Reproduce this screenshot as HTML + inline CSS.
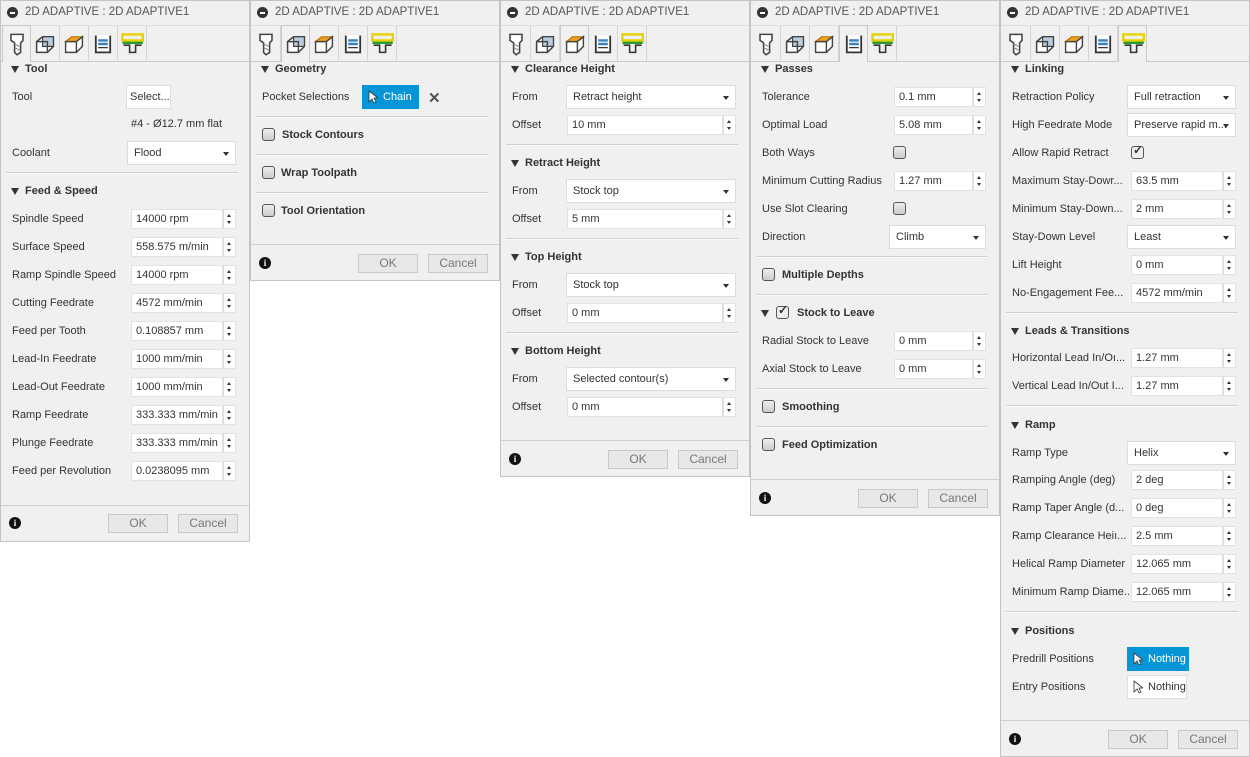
<!DOCTYPE html>
<html><head><meta charset="utf-8"><style>
*{box-sizing:border-box;margin:0;padding:0}
body{width:1250px;height:757px;background:#fff;position:relative;overflow:hidden;font-family:"Liberation Sans",Arial,sans-serif;font-size:11px;color:#333}
.p{position:absolute;top:0;width:250px;border:1px solid #c4c4c4;background:#f0f0f0}
.p>*{position:absolute}
.tt{left:24px;top:5px;color:#555;font-size:11.5px;letter-spacing:0}
.mi{left:6px;top:6px;width:11px;height:11px;border-radius:50%;background:#333}
.mi:after{content:"";position:absolute;left:3px;top:5px;width:5px;height:1.5px;background:#fff}
.tabs{left:0;top:24px;width:248px;height:37px;border-top:1px solid #ddd;border-bottom:1px solid #c9c9c9}
.tab{position:absolute;top:0;width:29px;height:36px;border-right:1px solid #d4d4d4}
.tab.a{background:#f0f0f0;border:1px solid #c9c9c9;border-bottom:none;height:37px;top:-1px}
.tab svg{position:absolute;left:4px;top:7px;transform:scale(1.2);transform-origin:10px 11px}
.l{left:11px;line-height:14px;white-space:nowrap}
.h{left:24px;font-weight:bold;line-height:14px}
.tri{left:10px;width:0;height:0;border-left:4.5px solid transparent;border-right:4.5px solid transparent;border-top:7px solid #333}
.in{background:#fff;border:1px solid #e2e2e2;height:20px;line-height:18px;padding-left:4px;white-space:nowrap;overflow:hidden}
.sp{width:13px;height:20px;background:#fff;border:1px solid #e2e2e2;border-left:1px solid #ddd}
.sp:before,.sp:after{content:"";position:absolute;left:3px;border-left:2.5px solid transparent;border-right:2.5px solid transparent}
.sp:before{top:4px;border-bottom:3px solid #333}
.sp:after{top:11px;border-top:3px solid #333}
.dd{background:#fff;border:1px solid #dcdcdc;height:24px;line-height:22px;padding-left:6px;white-space:nowrap}
.dd:after{content:"";position:absolute;right:6px;top:10px;border-left:3.5px solid transparent;border-right:3.5px solid transparent;border-top:4px solid #333}
.sep{left:5px;width:232px;height:2px;border-top:1px solid #cfcfcf;border-bottom:1px solid #fafafa}
.cb{width:13px;height:13px;border:1px solid #555;border-radius:3px;background:linear-gradient(#eee,#ccc)}
.bh{font-weight:bold;line-height:14px}
.fl{left:0;width:248px;height:1px;background:#cfcfcf}
.info{left:8px;width:12px;height:12px;border-radius:50%;background:#111;color:#fff;font:bold 9px "Liberation Serif",serif;text-align:center;line-height:12px}
.btn{width:60px;height:19px;border:1px solid #c8c8c8;background:#e8e8e8;text-align:center;line-height:17px;font-size:12px;color:#777}
.bb{background:#0696d7;color:#fff;height:24px;line-height:24px;padding-left:21px}
.wb{background:#fff;border:1px solid #ddd;height:24px;line-height:22px;padding-left:20px}
</style></head><body>

<!-- PANEL 1 -->
<div class="p" style="left:0;height:542px">
<div class="mi"></div><div class="tt">2D ADAPTIVE : 2D ADAPTIVE1</div>
<div class="tabs">
<div class="tab a" style="left:1px"><svg width="20" height="22"><path d="M5 3h10v5l-2 2v8l-3 2-2-2v-8l-3-2z" fill="#fff" stroke="#444" stroke-width="1.3"/><path d="M8 11l4 2M8 14l4 2" stroke="#888"/></svg></div>
<div class="tab" style="left:30px"><svg width="20" height="22"><path d="M3 9l5-4h9v8l-5 5H3z" fill="#fff" stroke="#444" stroke-width="1.3"/><path d="M8 5h9v8H8z" fill="#bcd" stroke="#444"/><path d="M3 9h9v9" fill="none" stroke="#444" stroke-width="1.2"/></svg></div>
<div class="tab" style="left:59px"><svg width="20" height="22"><path d="M3 9l5-4h9l-5 4z" fill="#f0a020" stroke="#b67000"/><path d="M3 9h9v9H3z M12 9l5-4v8l-5 5" fill="#fff" stroke="#444" stroke-width="1.2"/></svg></div>
<div class="tab" style="left:88px"><svg width="20" height="22"><path d="M4 4v14h12V4" fill="#fff" stroke="#333" stroke-width="1.5"/><path d="M6 8h8M6 11h8" stroke="#3a7fc0" stroke-width="2"/><path d="M6 14h8" stroke="#333"/></svg></div>
<div class="tab" style="left:117px"><svg width="22" height="22"><rect x="2" y="3" width="17" height="5" fill="none" stroke="#e6d200" stroke-width="2"/><path d="M2 10h17" stroke="#2a9a2a" stroke-width="2"/><path d="M3 12h5v6h5v-6h5" fill="none" stroke="#333" stroke-width="1.3"/></svg></div>
</div>
<div class="tri" style="top:65px"></div><div class="h" style="top:61px">Tool</div>
<div class="l" style="top:89px">Tool</div>
<div style="left:125px;top:84px;width:45px;height:24px;background:#fff;border:1px solid #ddd;line-height:22px;padding-left:3px">Select...</div>
<div style="left:130px;top:117px">#4 - Ø12.7 mm flat</div>
<div class="l" style="top:145px">Coolant</div>
<div class="dd" style="left:126px;top:140px;width:109px">Flood</div>
<div class="sep" style="top:171px"></div>
<div class="tri" style="top:187px"></div><div class="h" style="top:183px">Feed &amp; Speed</div>
<div class="l" style="top:211px">Spindle Speed</div><div class="in" style="left:130px;top:208px;width:92px">14000 rpm</div><div class="sp" style="left:222px;top:208px"></div>
<div class="l" style="top:239px">Surface Speed</div><div class="in" style="left:130px;top:236px;width:92px">558.575 m/min</div><div class="sp" style="left:222px;top:236px"></div>
<div class="l" style="top:267px">Ramp Spindle Speed</div><div class="in" style="left:130px;top:264px;width:92px">14000 rpm</div><div class="sp" style="left:222px;top:264px"></div>
<div class="l" style="top:295px">Cutting Feedrate</div><div class="in" style="left:130px;top:292px;width:92px">4572 mm/min</div><div class="sp" style="left:222px;top:292px"></div>
<div class="l" style="top:323px">Feed per Tooth</div><div class="in" style="left:130px;top:320px;width:92px">0.108857 mm</div><div class="sp" style="left:222px;top:320px"></div>
<div class="l" style="top:351px">Lead-In Feedrate</div><div class="in" style="left:130px;top:348px;width:92px">1000 mm/min</div><div class="sp" style="left:222px;top:348px"></div>
<div class="l" style="top:379px">Lead-Out Feedrate</div><div class="in" style="left:130px;top:376px;width:92px">1000 mm/min</div><div class="sp" style="left:222px;top:376px"></div>
<div class="l" style="top:407px">Ramp Feedrate</div><div class="in" style="left:130px;top:404px;width:92px">333.333 mm/min</div><div class="sp" style="left:222px;top:404px"></div>
<div class="l" style="top:435px">Plunge Feedrate</div><div class="in" style="left:130px;top:432px;width:92px">333.333 mm/min</div><div class="sp" style="left:222px;top:432px"></div>
<div class="l" style="top:463px">Feed per Revolution</div><div class="in" style="left:130px;top:460px;width:92px">0.0238095 mm</div><div class="sp" style="left:222px;top:460px"></div>
<div class="fl" style="top:504px"></div>
<div class="info" style="top:516px">i</div>
<div class="btn" style="left:107px;top:513px">OK</div><div class="btn" style="left:177px;top:513px">Cancel</div>
</div>

<!-- PANEL 2 -->
<div class="p" style="left:250px;height:281px">
<div class="mi"></div><div class="tt">2D ADAPTIVE : 2D ADAPTIVE1</div>
<div class="tabs">
<div class="tab" style="left:1px"><svg width="20" height="22"><path d="M5 3h10v5l-2 2v8l-3 2-2-2v-8l-3-2z" fill="#fff" stroke="#444" stroke-width="1.3"/><path d="M8 11l4 2M8 14l4 2" stroke="#888"/></svg></div>
<div class="tab a" style="left:30px"><svg width="20" height="22"><path d="M3 9l5-4h9v8l-5 5H3z" fill="#fff" stroke="#444" stroke-width="1.3"/><path d="M8 5h9v8H8z" fill="#bcd" stroke="#444"/><path d="M3 9h9v9" fill="none" stroke="#444" stroke-width="1.2"/></svg></div>
<div class="tab" style="left:59px"><svg width="20" height="22"><path d="M3 9l5-4h9l-5 4z" fill="#f0a020" stroke="#b67000"/><path d="M3 9h9v9H3z M12 9l5-4v8l-5 5" fill="#fff" stroke="#444" stroke-width="1.2"/></svg></div>
<div class="tab" style="left:88px"><svg width="20" height="22"><path d="M4 4v14h12V4" fill="#fff" stroke="#333" stroke-width="1.5"/><path d="M6 8h8M6 11h8" stroke="#3a7fc0" stroke-width="2"/><path d="M6 14h8" stroke="#333"/></svg></div>
<div class="tab" style="left:117px"><svg width="22" height="22"><rect x="2" y="3" width="17" height="5" fill="none" stroke="#e6d200" stroke-width="2"/><path d="M2 10h17" stroke="#2a9a2a" stroke-width="2"/><path d="M3 12h5v6h5v-6h5" fill="none" stroke="#333" stroke-width="1.3"/></svg></div>
</div>
<div class="tri" style="top:65px"></div><div class="h" style="top:61px">Geometry</div>
<div class="l" style="top:89px">Pocket Selections</div>
<div class="bb" style="left:111px;top:84px;width:57px">Chain<svg style="position:absolute;left:6px;top:5px" width="10" height="14"><path d="M1 1v11l3-3 2 4 2-1-2-4h4z" fill="#fff" stroke="#333" stroke-width=".8"/></svg></div>
<div style="left:177px;top:88px;font-size:15px;font-weight:bold;color:#555">✕</div>
<div class="sep" style="top:115px"></div>
<div class="cb" style="left:11px;top:127px"></div><div class="bh" style="left:31px;top:127px">Stock Contours</div>
<div class="sep" style="top:153px"></div>
<div class="cb" style="left:11px;top:165px"></div><div class="bh" style="left:30px;top:165px">Wrap Toolpath</div>
<div class="sep" style="top:191px"></div>
<div class="cb" style="left:11px;top:203px"></div><div class="bh" style="left:30px;top:203px">Tool Orientation</div>
<div class="fl" style="top:243px"></div>
<div class="info" style="top:256px">i</div>
<div class="btn" style="left:107px;top:253px">OK</div><div class="btn" style="left:177px;top:253px">Cancel</div>
</div>

<!-- PANEL 3 -->
<div class="p" style="left:500px;height:477px">
<div class="mi"></div><div class="tt">2D ADAPTIVE : 2D ADAPTIVE1</div>
<div class="tabs">
<div class="tab" style="left:1px"><svg width="20" height="22"><path d="M5 3h10v5l-2 2v8l-3 2-2-2v-8l-3-2z" fill="#fff" stroke="#444" stroke-width="1.3"/><path d="M8 11l4 2M8 14l4 2" stroke="#888"/></svg></div>
<div class="tab" style="left:30px"><svg width="20" height="22"><path d="M3 9l5-4h9v8l-5 5H3z" fill="#fff" stroke="#444" stroke-width="1.3"/><path d="M8 5h9v8H8z" fill="#bcd" stroke="#444"/><path d="M3 9h9v9" fill="none" stroke="#444" stroke-width="1.2"/></svg></div>
<div class="tab a" style="left:59px"><svg width="20" height="22"><path d="M3 9l5-4h9l-5 4z" fill="#f0a020" stroke="#b67000"/><path d="M3 9h9v9H3z M12 9l5-4v8l-5 5" fill="#fff" stroke="#444" stroke-width="1.2"/></svg></div>
<div class="tab" style="left:88px"><svg width="20" height="22"><path d="M4 4v14h12V4" fill="#fff" stroke="#333" stroke-width="1.5"/><path d="M6 8h8M6 11h8" stroke="#3a7fc0" stroke-width="2"/><path d="M6 14h8" stroke="#333"/></svg></div>
<div class="tab" style="left:117px"><svg width="22" height="22"><rect x="2" y="3" width="17" height="5" fill="none" stroke="#e6d200" stroke-width="2"/><path d="M2 10h17" stroke="#2a9a2a" stroke-width="2"/><path d="M3 12h5v6h5v-6h5" fill="none" stroke="#333" stroke-width="1.3"/></svg></div>
</div>
<div class="tri" style="top:65px"></div><div class="h" style="top:61px">Clearance Height</div>
<div class="l" style="top:89px">From</div><div class="dd" style="left:65px;top:84px;width:170px">Retract height</div>
<div class="l" style="top:117px">Offset</div><div class="in" style="left:66px;top:114px;width:156px">10 mm</div><div class="sp" style="left:222px;top:114px"></div>
<div class="sep" style="top:143px"></div>
<div class="tri" style="top:159px"></div><div class="h" style="top:155px">Retract Height</div>
<div class="l" style="top:183px">From</div><div class="dd" style="left:65px;top:178px;width:170px">Stock top</div>
<div class="l" style="top:211px">Offset</div><div class="in" style="left:66px;top:208px;width:156px">5 mm</div><div class="sp" style="left:222px;top:208px"></div>
<div class="sep" style="top:237px"></div>
<div class="tri" style="top:253px"></div><div class="h" style="top:249px">Top Height</div>
<div class="l" style="top:277px">From</div><div class="dd" style="left:65px;top:272px;width:170px">Stock top</div>
<div class="l" style="top:305px">Offset</div><div class="in" style="left:66px;top:302px;width:156px">0 mm</div><div class="sp" style="left:222px;top:302px"></div>
<div class="sep" style="top:331px"></div>
<div class="tri" style="top:347px"></div><div class="h" style="top:343px">Bottom Height</div>
<div class="l" style="top:371px">From</div><div class="dd" style="left:65px;top:366px;width:170px">Selected contour(s)</div>
<div class="l" style="top:399px">Offset</div><div class="in" style="left:66px;top:396px;width:156px">0 mm</div><div class="sp" style="left:222px;top:396px"></div>
<div class="fl" style="top:439px"></div>
<div class="info" style="top:452px">i</div>
<div class="btn" style="left:107px;top:449px">OK</div><div class="btn" style="left:177px;top:449px">Cancel</div>
</div>

<!-- PANEL 4 -->
<div class="p" style="left:750px;height:516px">
<div class="mi"></div><div class="tt">2D ADAPTIVE : 2D ADAPTIVE1</div>
<div class="tabs">
<div class="tab" style="left:1px"><svg width="20" height="22"><path d="M5 3h10v5l-2 2v8l-3 2-2-2v-8l-3-2z" fill="#fff" stroke="#444" stroke-width="1.3"/><path d="M8 11l4 2M8 14l4 2" stroke="#888"/></svg></div>
<div class="tab" style="left:30px"><svg width="20" height="22"><path d="M3 9l5-4h9v8l-5 5H3z" fill="#fff" stroke="#444" stroke-width="1.3"/><path d="M8 5h9v8H8z" fill="#bcd" stroke="#444"/><path d="M3 9h9v9" fill="none" stroke="#444" stroke-width="1.2"/></svg></div>
<div class="tab" style="left:59px"><svg width="20" height="22"><path d="M3 9l5-4h9l-5 4z" fill="#f0a020" stroke="#b67000"/><path d="M3 9h9v9H3z M12 9l5-4v8l-5 5" fill="#fff" stroke="#444" stroke-width="1.2"/></svg></div>
<div class="tab a" style="left:88px"><svg width="20" height="22"><path d="M4 4v14h12V4" fill="#fff" stroke="#333" stroke-width="1.5"/><path d="M6 8h8M6 11h8" stroke="#3a7fc0" stroke-width="2"/><path d="M6 14h8" stroke="#333"/></svg></div>
<div class="tab" style="left:117px"><svg width="22" height="22"><rect x="2" y="3" width="17" height="5" fill="none" stroke="#e6d200" stroke-width="2"/><path d="M2 10h17" stroke="#2a9a2a" stroke-width="2"/><path d="M3 12h5v6h5v-6h5" fill="none" stroke="#333" stroke-width="1.3"/></svg></div>
</div>
<div class="tri" style="top:65px"></div><div class="h" style="top:61px">Passes</div>
<div class="l" style="top:89px">Tolerance</div><div class="in" style="left:143px;top:86px;width:79px">0.1 mm</div><div class="sp" style="left:222px;top:86px"></div>
<div class="l" style="top:117px">Optimal Load</div><div class="in" style="left:143px;top:114px;width:79px">5.08 mm</div><div class="sp" style="left:222px;top:114px"></div>
<div class="l" style="top:145px">Both Ways</div><div class="cb" style="left:142px;top:145px"></div>
<div class="l" style="top:173px">Minimum Cutting Radius</div><div class="in" style="left:143px;top:170px;width:79px">1.27 mm</div><div class="sp" style="left:222px;top:170px"></div>
<div class="l" style="top:201px">Use Slot Clearing</div><div class="cb" style="left:142px;top:201px"></div>
<div class="l" style="top:229px">Direction</div><div class="dd" style="left:138px;top:224px;width:97px">Climb</div>
<div class="sep" style="top:255px"></div>
<div class="cb" style="left:11px;top:267px"></div><div class="bh" style="left:31px;top:267px">Multiple Depths</div>
<div class="sep" style="top:293px"></div>
<div class="tri" style="top:309px"></div><div class="cb" style="left:25px;top:305px;background:#eee"></div><div style="left:27px;top:302px;font-size:12px;font-weight:bold">✓</div><div class="bh" style="left:46px;top:305px">Stock to Leave</div>
<div class="l" style="top:333px">Radial Stock to Leave</div><div class="in" style="left:143px;top:330px;width:79px">0 mm</div><div class="sp" style="left:222px;top:330px"></div>
<div class="l" style="top:361px">Axial Stock to Leave</div><div class="in" style="left:143px;top:358px;width:79px">0 mm</div><div class="sp" style="left:222px;top:358px"></div>
<div class="sep" style="top:387px"></div>
<div class="cb" style="left:11px;top:399px"></div><div class="bh" style="left:31px;top:399px">Smoothing</div>
<div class="sep" style="top:425px"></div>
<div class="cb" style="left:11px;top:437px"></div><div class="bh" style="left:31px;top:437px">Feed Optimization</div>
<div class="fl" style="top:478px"></div>
<div class="info" style="top:491px">i</div>
<div class="btn" style="left:107px;top:488px">OK</div><div class="btn" style="left:177px;top:488px">Cancel</div>
</div>

<!-- PANEL 5 -->
<div class="p" style="left:1000px;height:757px">
<div class="mi"></div><div class="tt">2D ADAPTIVE : 2D ADAPTIVE1</div>
<div class="tabs">
<div class="tab" style="left:1px"><svg width="20" height="22"><path d="M5 3h10v5l-2 2v8l-3 2-2-2v-8l-3-2z" fill="#fff" stroke="#444" stroke-width="1.3"/><path d="M8 11l4 2M8 14l4 2" stroke="#888"/></svg></div>
<div class="tab" style="left:30px"><svg width="20" height="22"><path d="M3 9l5-4h9v8l-5 5H3z" fill="#fff" stroke="#444" stroke-width="1.3"/><path d="M8 5h9v8H8z" fill="#bcd" stroke="#444"/><path d="M3 9h9v9" fill="none" stroke="#444" stroke-width="1.2"/></svg></div>
<div class="tab" style="left:59px"><svg width="20" height="22"><path d="M3 9l5-4h9l-5 4z" fill="#f0a020" stroke="#b67000"/><path d="M3 9h9v9H3z M12 9l5-4v8l-5 5" fill="#fff" stroke="#444" stroke-width="1.2"/></svg></div>
<div class="tab" style="left:88px"><svg width="20" height="22"><path d="M4 4v14h12V4" fill="#fff" stroke="#333" stroke-width="1.5"/><path d="M6 8h8M6 11h8" stroke="#3a7fc0" stroke-width="2"/><path d="M6 14h8" stroke="#333"/></svg></div>
<div class="tab a" style="left:117px"><svg width="22" height="22"><rect x="2" y="3" width="17" height="5" fill="none" stroke="#e6d200" stroke-width="2"/><path d="M2 10h17" stroke="#2a9a2a" stroke-width="2"/><path d="M3 12h5v6h5v-6h5" fill="none" stroke="#333" stroke-width="1.3"/></svg></div>
</div>
<div class="tri" style="top:65px"></div><div class="h" style="top:61px">Linking</div>
<div class="l" style="top:89px">Retraction Policy</div><div class="dd" style="left:126px;top:84px;width:109px">Full retraction</div>
<div class="l" style="top:117px">High Feedrate Mode</div><div class="dd" style="left:126px;top:112px;width:109px">Preserve rapid m...</div>
<div class="l" style="top:145px">Allow Rapid Retract</div><div class="cb" style="left:130px;top:145px;background:#eee"></div><div style="left:132px;top:142px;font-size:12px;font-weight:bold">✓</div>
<div class="l" style="top:173px">Maximum Stay-Dowr...</div><div class="in" style="left:130px;top:170px;width:92px">63.5 mm</div><div class="sp" style="left:222px;top:170px"></div>
<div class="l" style="top:201px">Minimum Stay-Down...</div><div class="in" style="left:130px;top:198px;width:92px">2 mm</div><div class="sp" style="left:222px;top:198px"></div>
<div class="l" style="top:229px">Stay-Down Level</div><div class="dd" style="left:126px;top:224px;width:109px">Least</div>
<div class="l" style="top:257px">Lift Height</div><div class="in" style="left:130px;top:254px;width:92px">0 mm</div><div class="sp" style="left:222px;top:254px"></div>
<div class="l" style="top:285px">No-Engagement Fee...</div><div class="in" style="left:130px;top:282px;width:92px">4572 mm/min</div><div class="sp" style="left:222px;top:282px"></div>
<div class="sep" style="top:311px"></div>
<div class="tri" style="top:327px"></div><div class="h" style="top:323px">Leads &amp; Transitions</div>
<div class="l" style="top:350px">Horizontal Lead In/Oı...</div><div class="in" style="left:130px;top:347px;width:92px">1.27 mm</div><div class="sp" style="left:222px;top:347px"></div>
<div class="l" style="top:378px">Vertical Lead In/Out I...</div><div class="in" style="left:130px;top:375px;width:92px">1.27 mm</div><div class="sp" style="left:222px;top:375px"></div>
<div class="sep" style="top:404px"></div>
<div class="tri" style="top:421px"></div><div class="h" style="top:417px">Ramp</div>
<div class="l" style="top:445px">Ramp Type</div><div class="dd" style="left:126px;top:440px;width:109px">Helix</div>
<div class="l" style="top:472px">Ramping Angle (deg)</div><div class="in" style="left:130px;top:469px;width:92px">2 deg</div><div class="sp" style="left:222px;top:469px"></div>
<div class="l" style="top:500px">Ramp Taper Angle (d...</div><div class="in" style="left:130px;top:497px;width:92px">0 deg</div><div class="sp" style="left:222px;top:497px"></div>
<div class="l" style="top:528px">Ramp Clearance Heiı...</div><div class="in" style="left:130px;top:525px;width:92px">2.5 mm</div><div class="sp" style="left:222px;top:525px"></div>
<div class="l" style="top:556px">Helical Ramp Diameter</div><div class="in" style="left:130px;top:553px;width:92px">12.065 mm</div><div class="sp" style="left:222px;top:553px"></div>
<div class="l" style="top:584px">Minimum Ramp Diame...</div><div class="in" style="left:130px;top:581px;width:92px">12.065 mm</div><div class="sp" style="left:222px;top:581px"></div>
<div class="sep" style="top:610px"></div>
<div class="tri" style="top:627px"></div><div class="h" style="top:623px">Positions</div>
<div class="l" style="top:651px">Predrill Positions</div>
<div class="bb" style="left:126px;top:646px;width:62px">Nothing<svg style="position:absolute;left:6px;top:5px" width="10" height="14"><path d="M1 1v11l3-3 2 4 2-1-2-4h4z" fill="#fff" stroke="#333" stroke-width=".8"/></svg></div>
<div class="l" style="top:679px">Entry Positions</div>
<div class="wb" style="left:126px;top:674px;width:60px">Nothing<svg style="position:absolute;left:5px;top:4px" width="10" height="14"><path d="M1 1v11l3-3 2 4 2-1-2-4h4z" fill="#fff" stroke="#333" stroke-width=".8"/></svg></div>
<div class="fl" style="top:719px"></div>
<div class="info" style="top:732px">i</div>
<div class="btn" style="left:107px;top:729px">OK</div><div class="btn" style="left:177px;top:729px">Cancel</div>
</div>
</body></html>
